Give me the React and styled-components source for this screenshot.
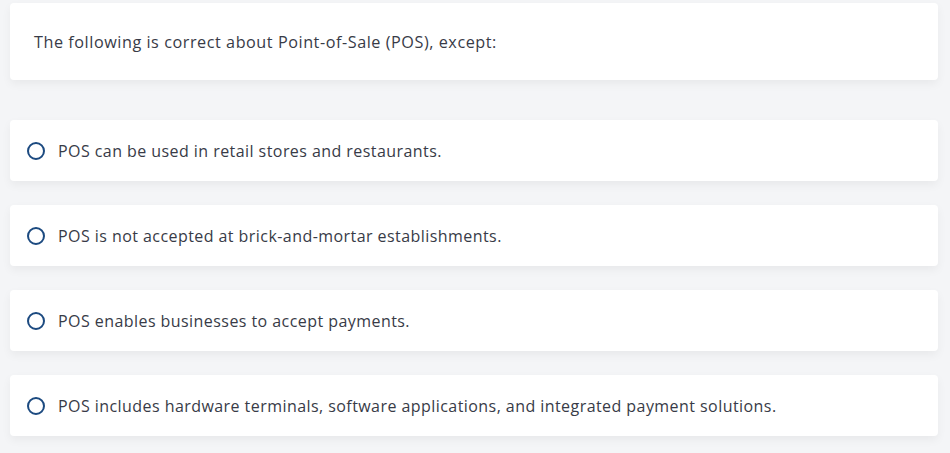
import React from "react";
import styled, { createGlobalStyle } from "styled-components";

const Global = createGlobalStyle`
  html, body { margin: 0; padding: 0; background: #f4f5f7; }
  body { font-family: "Open Sans", "Noto Sans", Arial, sans-serif; }
`;

const Page = styled.div`
  padding: 3px 12px 18px 10px;
  display: flex;
  flex-direction: column;
`;

const QuestionCard = styled.div`
  background: #fff;
  border-radius: 4px;
  box-shadow: 0 4px 10px rgba(0, 0, 0, 0.05);
  height: 77px;
  padding: 0 24px;
  display: flex;
  align-items: center;
  font-size: 16.2px;
  letter-spacing: 0.55px;
  color: #383b47;
  margin-bottom: 40px;
`;

const Options = styled.div`
  display: flex;
  flex-direction: column;
  gap: 24px;
`;

const OptionCard = styled.label`
  background: #fff;
  border-radius: 4px;
  box-shadow: 0 4px 10px rgba(0, 0, 0, 0.05);
  height: 61px;
  padding: 0 17px;
  display: flex;
  align-items: center;
  gap: 13px;
  font-size: 16px;
  letter-spacing: 0.44px;
  color: #383b47;
  cursor: pointer;
`;

const Radio = styled.span`
  width: 18px;
  height: 18px;
  box-sizing: border-box;
  border: 2.2px solid #1c4a80;
  border-radius: 50%;
  flex: none;
`;

const options = [
  "POS can be used in retail stores and restaurants.",
  "POS is not accepted at brick-and-mortar establishments.",
  "POS enables businesses to accept payments.",
  "POS includes hardware terminals, software applications, and integrated payment solutions.",
];

export default function App() {
  return (
    <>
      <Global />
      <Page>
        <QuestionCard>The following is correct about Point-of-Sale (POS), except:</QuestionCard>
        <Options>
          {options.map((o) => (
            <OptionCard key={o}>
              <Radio />
              <span>{o}</span>
            </OptionCard>
          ))}
        </Options>
      </Page>
    </>
  );
}
